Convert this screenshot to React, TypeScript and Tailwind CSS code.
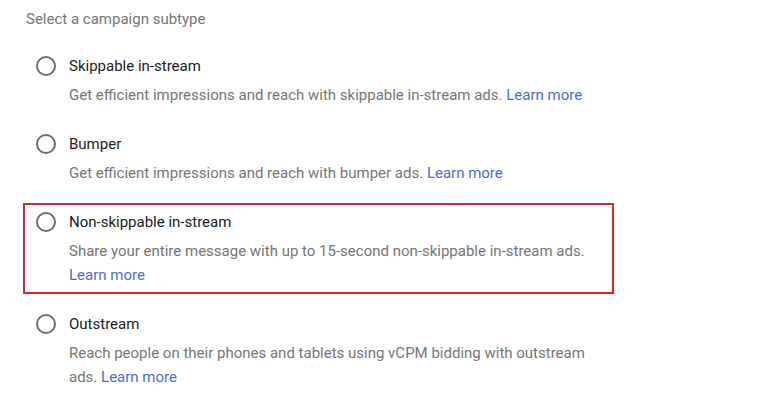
const options = [
  {
    id: "skippable",
    title: "Skippable in-stream",
    text: "Get efficient impressions and reach with skippable in-stream ads.",
    highlighted: false
  },
  {
    id: "bumper",
    title: "Bumper",
    text: "Get efficient impressions and reach with bumper ads.",
    highlighted: false
  },
  {
    id: "non-skippable",
    title: "Non-skippable in-stream",
    text: "Share your entire message with up to 15-second non-skippable in-stream ads.",
    highlighted: true
  },
  {
    id: "outstream",
    title: "Outstream",
    text: "Reach people on their phones and tablets using vCPM bidding with outstream ads.",
    highlighted: false
  }
];

const Radio = () => (
  <span className="block size-5 shrink-0 rounded-full border-2 border-[#6e6e6e]" />
);

export default function App() {
  return (
    <div
      className="h-[407px] w-[768px] bg-white"
      style={{ fontFamily: "Roboto, 'Liberation Sans', sans-serif" }}
    >
      <h2 className="pl-[26px] pt-[9px] text-[15px] leading-5 font-normal text-[#757575]">
        Select a campaign subtype
      </h2>
      <div className="mt-[18px] flex flex-col gap-[11px] pl-[23px]">
        {options.map((option) => (
          <label
            key={option.id}
            className={
              option.highlighted
                ? "flex w-[591px] gap-[13px] border-2 border-[#d8262a] pt-[7px] pr-[11px] pb-[5px] pl-[11px]"
                : "flex w-[591px] gap-[13px] border-2 border-transparent pt-[7px] pr-[11px] pb-[5px] pl-[11px]"
            }
          >
            <Radio />
            <div className="flex-1">
              <div className="text-[15px] leading-5 text-[#202124]">{option.title}</div>
              <p className="mt-[7px] text-[15px] leading-6 text-[#757575]">
                {option.text}{" "}
                <a href="#" className="whitespace-nowrap text-[#4a6cd4]">
                  Learn more
                </a>
              </p>
            </div>
          </label>
        ))}
      </div>
    </div>
  );
}
